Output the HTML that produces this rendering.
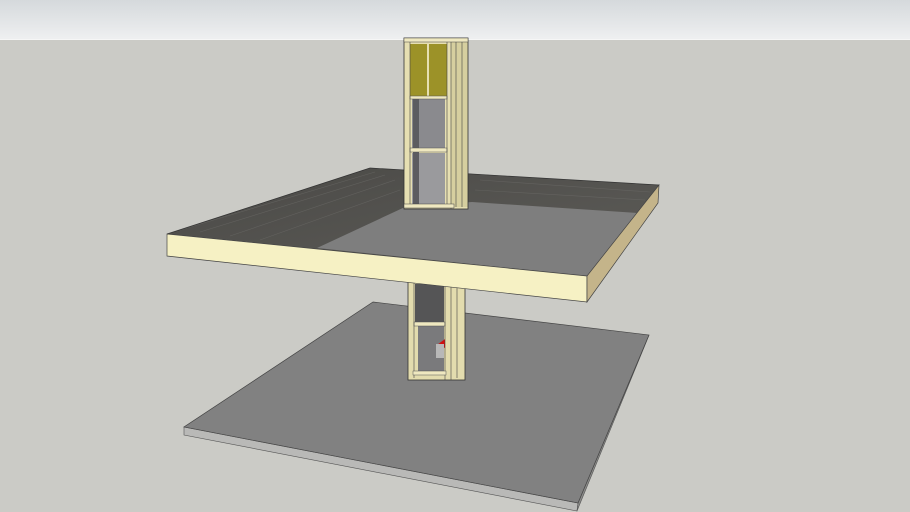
<!DOCTYPE html>
<html><head><meta charset="utf-8"><style>
html,body{margin:0;padding:0;width:910px;height:512px;overflow:hidden;background:#cbcbc6}
svg{display:block}
</style></head><body>
<svg width="910" height="512" viewBox="0 0 910 512" xmlns="http://www.w3.org/2000/svg">
<defs>
<linearGradient id="sky" x1="0" y1="0" x2="0" y2="1"><stop offset="0" stop-color="#d5d9dc"/><stop offset="1" stop-color="#eff0f1"/></linearGradient>
<linearGradient id="wood" x1="0" y1="0" x2="1" y2="1"><stop offset="0" stop-color="#4a4946"/><stop offset="1" stop-color="#5e5d59"/></linearGradient>
</defs>
<rect x="0" y="0" width="910" height="40" fill="url(#sky)"/>
<rect x="0" y="39" width="910" height="1" fill="#f6f6f6"/>
<rect x="0" y="40" width="910" height="472" fill="#cbcbc6"/>

<!-- bottom slab -->
<polygon points="184,427 184,435 577,511 578,503" fill="#b9b9b7" stroke="#555" stroke-width="0.6"/>
<polygon points="578,503 577,511 645,345 649,335" fill="#8a8a88" stroke="#555" stroke-width="0.6"/>
<polygon points="373,302 649,335 578,503 184,427" fill="#818181" stroke="#444" stroke-width="0.7"/>

<!-- lower tower -->
<rect x="408" y="282" width="57" height="98" fill="#e3dcae"/>
<rect x="415" y="284" width="29" height="40" fill="#555556"/>
<rect x="418" y="326" width="26" height="47" fill="#7a7a7c"/>
<polygon points="437,345 445,339 445,348" fill="#d01010"/>
<rect x="436" y="344" width="8" height="14" fill="#b8b8b8"/>
<rect x="414" y="322" width="31" height="4" fill="#efe8c0" stroke="#555" stroke-width="0.5"/>
<rect x="408" y="282" width="57" height="98" fill="none" stroke="#333" stroke-width="0.8"/>
<line x1="414" y1="282" x2="414" y2="378" stroke="#444" stroke-width="0.6"/>
<line x1="445" y1="282" x2="445" y2="380" stroke="#444" stroke-width="0.6"/>
<line x1="451" y1="282" x2="451" y2="380" stroke="#444" stroke-width="0.6"/>
<line x1="457" y1="282" x2="457" y2="378" stroke="#444" stroke-width="0.6"/>
<rect x="413" y="371" width="33" height="4" fill="#efe8c0" stroke="#555" stroke-width="0.5"/>

<!-- upper slab -->
<polygon points="370,168 659,185 587,276 167,234" fill="url(#wood)"/>
<g stroke="#6e6d6a" stroke-width="0.6" opacity="0.6">
<line x1="180" y1="230" x2="375" y2="172"/><line x1="200" y1="232" x2="385" y2="175"/>
<line x1="230" y1="236" x2="395" y2="180"/><line x1="260" y1="240" x2="400" y2="190"/>
<line x1="480" y1="180" x2="650" y2="192"/><line x1="475" y1="190" x2="645" y2="200"/>
</g>
<polygon points="317,248 405,207 472,202 637,213 587,276" fill="#7e7e7e"/>
<polygon points="167,234 587,276 587,302 167,256" fill="#f6f1c4" stroke="#444" stroke-width="0.7"/>
<polygon points="587,276 659,185 658,203 587,302" fill="#c4b48a" stroke="#444" stroke-width="0.7"/>
<line x1="167" y1="234" x2="370" y2="168" stroke="#333" stroke-width="0.7"/>
<line x1="370" y1="168" x2="659" y2="185" stroke="#333" stroke-width="0.7"/>

<!-- upper tower -->
<rect x="404" y="38" width="64" height="171" fill="#e6dfb2"/>
<rect x="451" y="38" width="17" height="169" fill="#d6cf9f"/>
<rect x="410" y="44" width="37" height="52" fill="#9c9228"/>
<line x1="428" y1="44" x2="428" y2="96" stroke="#e6dfb2" stroke-width="2"/>
<rect x="412" y="99" width="33" height="50" fill="#8a8a8e"/>
<rect x="412" y="153" width="33" height="52" fill="#9a9a9d"/>
<rect x="413" y="99" width="6" height="106" fill="#5c5c60"/>
<rect x="410" y="148" width="37" height="4" fill="#efe8c0" stroke="#555" stroke-width="0.5"/>
<rect x="410" y="96" width="37" height="3" fill="#efe8c0" stroke="#555" stroke-width="0.5"/>
<rect x="404" y="38" width="64" height="171" fill="none" stroke="#333" stroke-width="0.8"/>
<g stroke="#444" stroke-width="0.6">
<line x1="410" y1="40" x2="410" y2="207"/><line x1="447" y1="40" x2="447" y2="207"/>
<line x1="451" y1="38" x2="451" y2="209"/><line x1="456" y1="40" x2="456" y2="207"/>
<line x1="462" y1="40" x2="462" y2="207"/>
</g>
<rect x="404" y="38" width="64" height="4" fill="#efe8c0" stroke="#444" stroke-width="0.5"/>
<rect x="404" y="204" width="50" height="4" fill="#efe8c0" stroke="#444" stroke-width="0.5"/>
</svg>
</body></html>
